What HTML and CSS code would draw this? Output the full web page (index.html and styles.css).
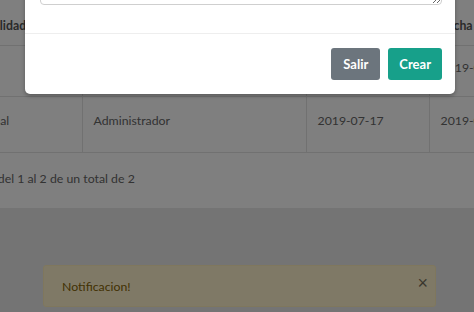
FILE: index.html
```html
<!DOCTYPE html>
<html lang="es">
<head>
    <meta charset="UTF-8">
    <meta name="viewport" content="width=device-width, initial-scale=1.0">
    <title>Usuarios</title>
    <link rel="stylesheet" href="styles.css">
</head>
<body>
    <div class="card">
        <table class="users-table">
            <thead>
                <tr>
                    <th class="col-name">Nombre</th>
                    <th class="col-vis">Visibilidad</th>
                    <th class="col-role">Rol</th>
                    <th class="col-date">Creado</th>
                    <th class="col-date">Fecha</th>
                    <th>Acciones</th>
                </tr>
            </thead>
            <tbody>
                <tr>
                    <td>Juan</td>
                    <td>Total</td>
                    <td>Usuario</td>
                    <td>2019-07-17</td>
                    <td>2019-07-17</td>
                    <td></td>
                </tr>
                <tr class="tall">
                    <td>Maria</td>
                    <td>Normal</td>
                    <td>Administrador</td>
                    <td>2019-07-17</td>
                    <td>2019-07-17</td>
                    <td></td>
                </tr>
            </tbody>
        </table>
        <div class="table-info">Mostrando registros del 1 al 2 de un total de 2</div>
    </div>

    <!-- Notification toast -->
    <div class="alert">
        <span class="alert-text">Notificacion!</span>
        <button class="alert-close">&times;</button>
    </div>

    <!-- Modal -->
    <div class="backdrop"></div>
    <div class="modal">
        <div class="modal-body">
            <textarea class="form-control"></textarea>
        </div>
        <div class="modal-footer">
            <button class="btn btn-secondary">Salir</button>
            <button class="btn btn-primary">Crear</button>
        </div>
    </div>
</body>
</html>
```

FILE: styles.css
```css
html, body {
    overflow: hidden;
}

body {
    margin: 0;
    font-family: Lato, "Open Sans", sans-serif;
    font-size: 12.3px;
    color: #666;
    background-color: #e8e8e8;
}

.card {
    width: 900px;
    margin: -20px 0 0 -114px;
    background: white;
    box-shadow: 0 1px 3px rgba(0,0,0,0.35);
}

.users-table {
    border-collapse: collapse;
    table-layout: fixed;
    width: 100%;
}

.users-table th,
.users-table td {
    box-sizing: border-box;
    text-align: left;
    line-height: 20px;
    border-right: 1px solid #e2e2e2;
    border-bottom: 1px solid #e2e2e2;
}

.users-table th {
    padding: 36px 11px 9px;
    color: #555;
    font-weight: bold;
}

.users-table td {
    padding: 12px 11px 18px;
}

.users-table tr.tall td {
    padding: 14px 11px 21px;
}

.col-name { width: 72px; }
.col-vis { width: 124px; }
.col-role { width: 224px; }
.col-date { width: 123px; }

.table-info {
    padding: 17px 0 20px;
    line-height: 18px;
}

.backdrop {
    position: fixed;
    inset: 0;
    background: rgba(0,0,0,0.5);
}

.modal {
    position: fixed;
    top: -61px;
    left: 25px;
    width: 430px;
    background: white;
    border-radius: 5px;
    box-shadow: 0 2px 4px rgba(0,0,0,0.3);
}

.modal-body {
    padding: 15px 13px 28px 15px;
}

.form-control {
    display: block;
    box-sizing: border-box;
    width: 100%;
    height: 51px;
    border: 1px solid #cfcfcf;
    border-radius: 4px;
    margin: 0;
}

.modal-footer {
    display: flex;
    justify-content: flex-end;
    gap: 8px;
    padding: 14px 13px 14px;
    border-top: 1px solid #eeeeee;
}

.btn {
    font-family: Lato, sans-serif;
    font-size: 13px;
    font-weight: bold;
    line-height: 20px;
    padding: 6px 11px;
    border: none;
    border-radius: 3px;
    color: white;
    cursor: pointer;
}

.btn-secondary {
    background: #6c757d;
    padding: 6px 12px;
}

.btn-primary {
    background: #17a08a;
}

.alert {
    position: fixed;
    left: 43px;
    right: 38px;
    bottom: 5px;
    display: flex;
    align-items: flex-start;
    padding: 12px 7px 10px 18px;
    background: #fff3cd;
    border: 1px solid #ffeeba;
    border-radius: 3px;
    color: #856404;
}

.alert-text {
    line-height: 18px;
}

.alert-close {
    margin-left: auto;
    padding: 0;
    border: none;
    background: none;
    font-size: 18px;
    line-height: 10px;
    color: #000;
    opacity: 0.55;
    cursor: pointer;
}
```
